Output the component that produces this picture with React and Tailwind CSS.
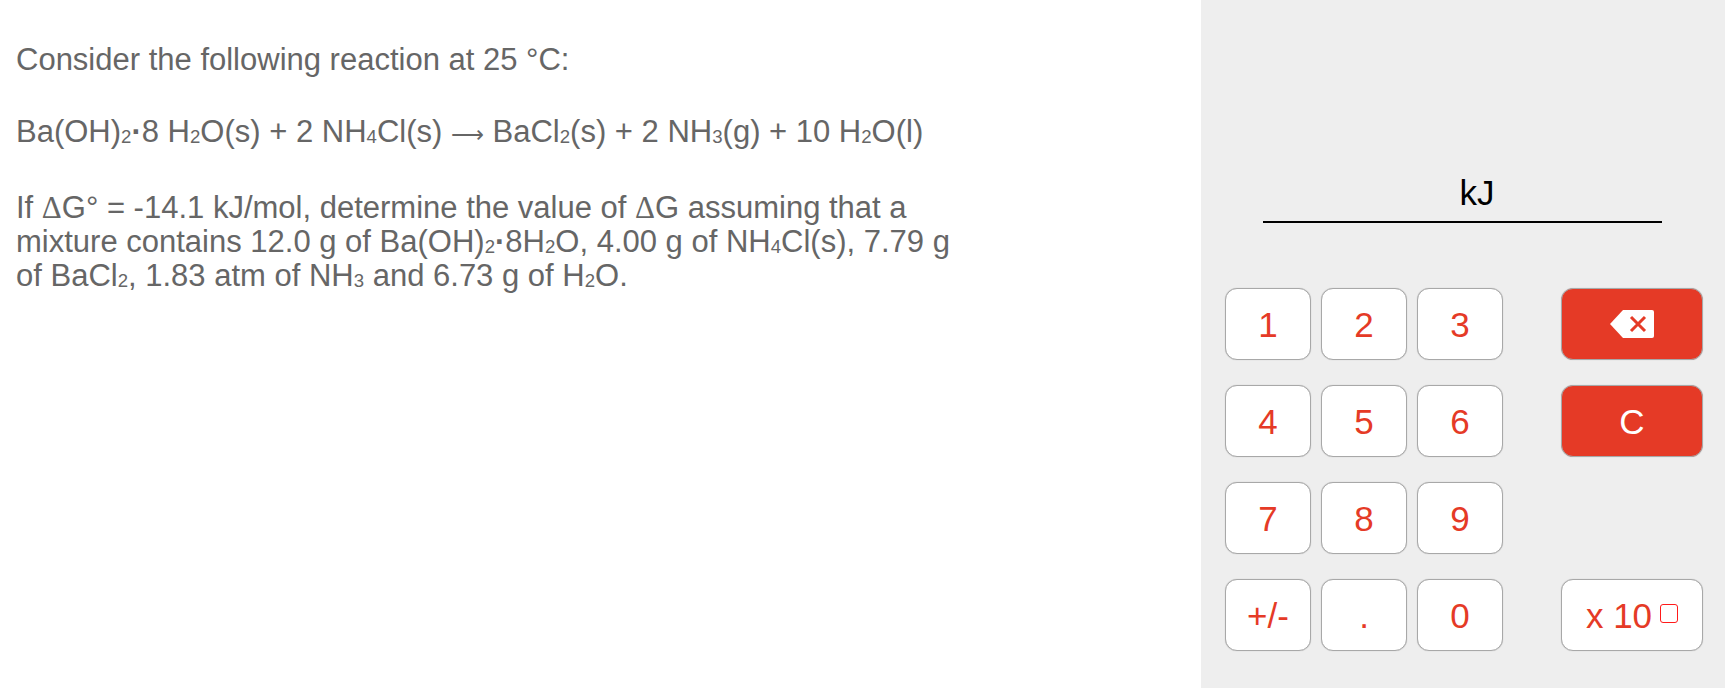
import React from "react";

const Sub = ({ children }) => (
  <sub className="text-[0.6em] bottom-[-0.08em]">{children}</sub>
);
const D = () => <span className="font-['Liberation_Serif',serif]">Δ</span>;
const Dot = () => <span className="font-bold">·</span>;

const Key = ({ children, red, className = "" }) => (
  <div
    className={
      "h-[72px] rounded-[12px] border border-[#a8a8a8] shadow-[0_0_1px_rgba(0,0,0,0.25)] flex items-center justify-center text-[35px] leading-none " +
      (red ? "bg-[#e53a26] text-white " : "bg-white text-[#e53a26] ") +
      className
    }
  >
    {children}
  </div>
);

export default function App() {
  return (
    <div className="flex w-[1725px] h-[688px] font-['Liberation_Sans',Arial,sans-serif] bg-white overflow-hidden">
      <div className="w-[1201px] shrink-0 pl-[16px] pt-[43px] text-[31px] leading-[34px] text-[#666666] whitespace-nowrap">
        <p className="mb-[38px]">Consider the following reaction at 25 °C:</p>
        <p className="mb-[40px]">
          Ba(OH)<Sub>2</Sub><Dot />8 H<Sub>2</Sub>O(s) + 2 NH<Sub>4</Sub>Cl(s) <span className="font-['Liberation_Serif',serif] text-[0.75em]">⟶</span> BaCl<Sub>2</Sub>(s) + 2 NH<Sub>3</Sub>(g) + 10 H<Sub>2</Sub>O(l)
        </p>
        <p>
          If <D />G° = -14.1 kJ/mol, determine the value of <D />G assuming that a
          <br />
          mixture contains 12.0 g of Ba(OH)<Sub>2</Sub><Dot />8H<Sub>2</Sub>O, 4.00 g of NH<Sub>4</Sub>Cl(s), 7.79 g
          <br />
          of BaCl<Sub>2</Sub>, 1.83 atm of NH<Sub>3</Sub> and 6.73 g of H<Sub>2</Sub>O.
        </p>
      </div>
      <div className="flex-1 bg-[#eeeeee] pt-[173px]">
        <div className="ml-[62px] w-[399px] h-[50px] border-b-2 border-black flex items-end justify-center pl-[29px] pb-[11px]">
          <span className="text-[35px] leading-none text-black">kJ</span>
        </div>
        <div className="ml-[24px] mt-[65px] grid grid-cols-[86px_86px_86px_190px] gap-x-[10px] gap-y-[25px]">
          <Key>1</Key>
          <Key>2</Key>
          <Key>3</Key>
          <Key red className="w-[142px] justify-self-end">
            <svg width="46" height="30" viewBox="0 0 46 30">
              <path d="M14 1 H43 a2 2 0 0 1 2 2 V27 a2 2 0 0 1 -2 2 H14 L1 15 Z" fill="white" />
              <path d="M22 8 L36 22 M36 8 L22 22" stroke="#e53a26" strokeWidth="3" />
            </svg>
          </Key>
          <Key>4</Key>
          <Key>5</Key>
          <Key>6</Key>
          <Key red className="w-[142px] justify-self-end">C</Key>
          <Key>7</Key>
          <Key>8</Key>
          <Key>9</Key>
          <div />
          <Key>+/-</Key>
          <Key>.</Key>
          <Key>0</Key>
          <Key className="w-[142px] justify-self-end">
            <span>x 10</span>
            <span className="ml-[8px] mb-[3px] w-[18px] h-[19px] border-[1.5px] border-[#ff1a1a] rounded-[3px] inline-block" />
          </Key>
        </div>
      </div>
    </div>
  );
}
